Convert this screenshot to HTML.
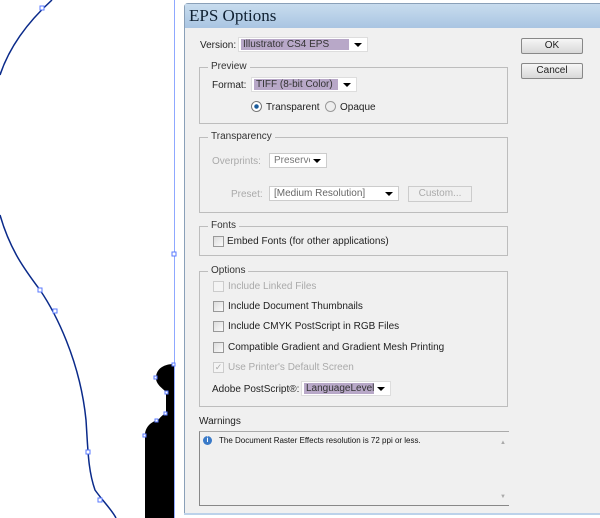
<!DOCTYPE html>
<html><head><style>
*{margin:0;padding:0;box-sizing:border-box}
body{width:600px;height:518px;background:#fff;position:relative;overflow:hidden;font-family:"Liberation Sans",sans-serif;font-size:10px;color:#222}
.a{position:absolute;white-space:nowrap}
#dlg{position:absolute;left:184px;top:3px;width:420px;height:512px;background:#f0f0f0;border:1px solid #8aa0b8;border-radius:4px 0 0 0}
#title{position:absolute;left:0;top:0;width:100%;height:24px;background:linear-gradient(#c8dcee,#a9c5e2);font-family:"Liberation Serif",serif;font-size:17px;color:#123;padding:2px 0 0 4px}
.grp{position:absolute;border:1px solid #bdbdbd}
.lg{position:absolute;top:-7px;left:8px;background:#f0f0f0;padding:0 3px;color:#333}
.dd{position:absolute;background:#fff;border:1px solid #ddd;height:15px;white-space:nowrap}
.dd .hl{position:absolute;left:2px;top:1px;height:11px;background:#b8a8c8;padding:0 2px;line-height:11px;color:#333;overflow:hidden;white-space:nowrap}
.tri{position:absolute;right:5px;top:5px;width:0;height:0;border-left:4px solid transparent;border-right:4px solid transparent;border-top:4px solid #000}
.btn{position:absolute;width:62px;height:16px;border:1px solid #888;border-radius:2px;background:linear-gradient(#f6f6f6,#d8d8d8);text-align:center;line-height:14px}
.cb{position:absolute;width:11px;height:11px;border:1px solid #999;background:linear-gradient(135deg,#ddd,#fafafa)}
.dis{color:#aaa}
</style></head><body>
<svg width="190" height="518" style="position:absolute;left:0;top:0">
<path d="M174,364 C165,364 156,368 156,378 C156,386 166,390 166,393 L166,413 C162,415 160,418 158,420 C150,422 145,428 145,435 L145,518 L174,518 Z" fill="#000"/>
<path d="M52,0 C30,20 10,45 0,75" fill="none" stroke="#0a2a8a" stroke-width="1.5"/>
<path d="M0,215 C10,250 25,270 40,290 C55,312 80,360 86,420 C88,450 88,470 95,490 C102,500 112,510 116,518" fill="none" stroke="#0a2a8a" stroke-width="1.5"/>
<line x1="174.5" y1="0" x2="174.5" y2="518" stroke="#8fa8ff" stroke-width="1"/>
<g fill="#fff" stroke="#5a7aff" stroke-width="1">
<rect x="40" y="6" width="4" height="4"/><rect x="172" y="252" width="4" height="4"/><rect x="38" y="288" width="4" height="4"/><rect x="53" y="309" width="4" height="4"/><rect x="86" y="450" width="4" height="4"/><rect x="98" y="498" width="4" height="4"/>
<rect x="154" y="376" width="3" height="3"/><rect x="165" y="391" width="3" height="3"/><rect x="164" y="412" width="3" height="3"/><rect x="155" y="419" width="3" height="3"/><rect x="143" y="434" width="3" height="3"/><rect x="172" y="363" width="3" height="3"/>
</g>
</svg>
<div id="dlg">
<div id="title">EPS Options</div>
</div>
<div class="a" style="left:200px;top:40px">Version:</div>
<div class="dd" style="left:238px;top:37px;width:130px"><div class="hl" style="width:108px">Illustrator CS4 EPS</div><div class="tri"></div></div>
<div class="btn" style="left:521px;top:38px">OK</div>
<div class="btn" style="left:521px;top:63px">Cancel</div>

<div class="grp" style="left:199px;top:67px;width:309px;height:57px"><div class="lg">Preview</div></div>
<div class="a" style="left:212px;top:80px">Format:</div>
<div class="dd" style="left:251px;top:77px;width:106px"><div class="hl" style="width:84px">TIFF (8-bit Color)</div><div class="tri"></div></div>
<div class="a" style="left:251px;top:101px;width:11px;height:11px;border-radius:50%;border:1px solid #777;background:radial-gradient(#1a5a9a 30%,#fff 40%)"></div>
<div class="a" style="left:266px;top:102px">Transparent</div>
<div class="a" style="left:325px;top:101px;width:11px;height:11px;border-radius:50%;border:1px solid #999;background:#eee"></div>
<div class="a" style="left:340px;top:102px">Opaque</div>

<div class="grp" style="left:199px;top:137px;width:309px;height:76px"><div class="lg">Transparency</div></div>
<div class="a dis" style="left:212px;top:156px">Overprints:</div>
<div class="dd" style="left:269px;top:153px;width:58px;border-color:#ccc"><div class="hl dis" style="background:none;color:#777;width:38px">Preserve</div><div class="tri"></div></div>
<div class="a dis" style="left:231px;top:189px">Preset:</div>
<div class="dd" style="left:269px;top:186px;width:130px;border-color:#ccc"><div class="hl" style="background:none;color:#666">[Medium Resolution]</div><div class="tri"></div></div>
<div class="a dis" style="left:408px;top:186px;width:64px;height:16px;border:1px solid #ccc;text-align:center;line-height:14px">Custom...</div>

<div class="grp" style="left:199px;top:226px;width:309px;height:30px"><div class="lg">Fonts</div></div>
<div class="cb" style="left:213px;top:236px"></div>
<div class="a" style="left:227px;top:236px">Embed Fonts (for other applications)</div>

<div class="grp" style="left:199px;top:271px;width:309px;height:136px"><div class="lg">Options</div></div>
<div class="cb" style="left:213px;top:281px;border-color:#ccc;background:#f4f4f4"></div><div class="a dis" style="left:228px;top:281px">Include Linked Files</div>
<div class="cb" style="left:213px;top:301px"></div><div class="a" style="left:228px;top:301px">Include Document Thumbnails</div>
<div class="cb" style="left:213px;top:321px"></div><div class="a" style="left:228px;top:321px">Include CMYK PostScript in RGB Files</div>
<div class="cb" style="left:213px;top:342px"></div><div class="a" style="left:228px;top:342px">Compatible Gradient and Gradient Mesh Printing</div>
<div class="cb" style="left:213px;top:362px;border-color:#ccc;background:#f4f4f4;color:#aaa;font-size:9px;line-height:9px;text-align:center">✓</div><div class="a dis" style="left:228px;top:362px">Use Printer's Default Screen</div>
<div class="a" style="left:212px;top:384px">Adobe PostScript®:</div>
<div class="dd" style="left:301px;top:381px;width:90px"><div class="hl" style="width:70px">LanguageLevel 2</div><div class="tri"></div></div>

<div class="a" style="left:199px;top:416px">Warnings</div>
<div class="a" style="left:199px;top:431px;width:310px;height:75px;border:1px solid #888;border-right:none;border-top:1px solid #aaa;background:#f0f0f0"></div>
<div class="a" style="left:203px;top:436px;width:9px;height:9px;border-radius:50%;background:#3a7ac8;color:#fff;font-size:7px;text-align:center;line-height:9px;font-weight:bold">i</div>
<div class="a" style="left:219px;top:436px;font-size:8px;color:#111">The Document Raster Effects resolution is 72 ppi or less.</div>
<div class="a" style="left:500px;top:440px;color:#aaa;font-size:6px">▲</div>
<div class="a" style="left:500px;top:494px;color:#aaa;font-size:6px">▼</div>
<div class="a" style="left:184px;top:513px;width:416px;height:2px;background:#bcd2ea"></div>
</body></html>
